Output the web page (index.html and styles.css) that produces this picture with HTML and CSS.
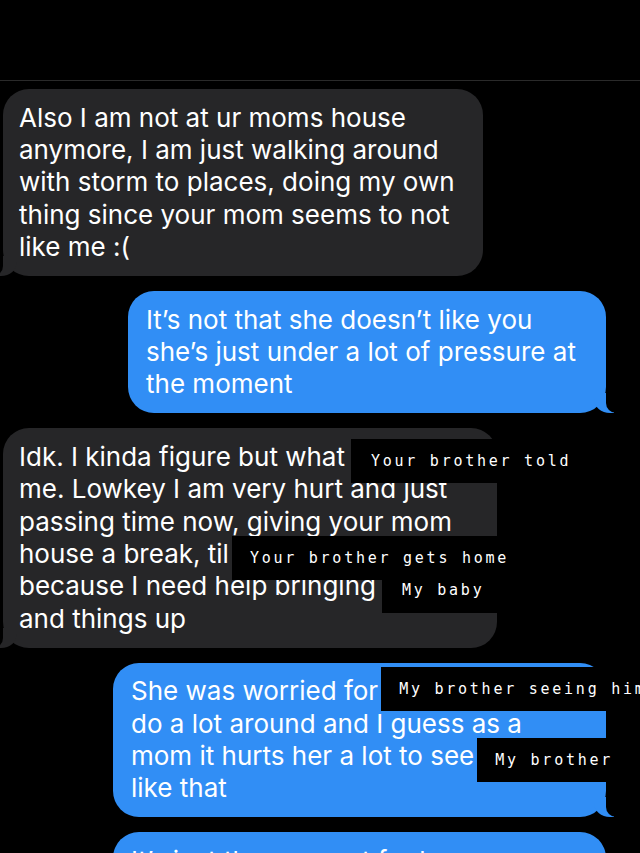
FILE: index.html
```html
<!DOCTYPE html>
<html lang="en">
<head>
<meta charset="utf-8">
<title>Messages</title>
<link rel="stylesheet" href="styles.css">
</head>
<body>
<div class="screen">
  <div class="topbar"></div>
  <div class="thread">
    <div class="msg in w1">
      <p>Also I am not at ur moms house<br>anymore, I am just walking around<br>with storm to places, doing my own<br>thing since your mom seems to not<br>like me :(</p>
    </div>
    <div class="msg out w2">
      <p>It’s not that she doesn’t like you<br>she’s just under a lot of pressure at<br>the moment</p>
    </div>
    <div class="msg in w3">
      <p>Idk. I kinda figure but what<span class="redact">Your brother told</span><br>me. Lowkey I am very hurt and just<br>passing time now, giving your mom<br>house a break, til<span class="redact tight">Your brother gets home</span><br>because I need help bringing<span class="redact">My baby</span><br>and things up</p>
    </div>
    <div class="msg out w4">
      <p>She was worried for<span class="redact tight raise">My brother seeing him</span><br>do a lot around and I guess as a<br>mom it hurts her a lot to see<span class="redact tight">My brother</span><br>like that</p>
    </div>
    <div class="msg out w4">
      <p>It’s just the moment for her<br>and she needs time</p>
    </div>
  </div>
</div>
</body>
</html>
```

FILE: styles.css
```css
html, body {
  margin: 0;
  padding: 0;
  background: #000;
  overflow: hidden;
}

body {
  width: 640px;
  height: 853px;
  font-family: Inter, "Noto Sans", sans-serif;
  color: #fff;
}

.screen {
  width: 640px;
  height: 853px;
  overflow: hidden;
}

.topbar {
  height: 80px;
  border-bottom: 1px solid #2a2a2a;
}

.thread {
  display: flex;
  flex-direction: column;
  gap: 15px;
  padding-top: 8px;
}

.msg {
  position: relative;
  box-sizing: border-box;
  border-radius: 26px;
  padding: 12.5px 18px;
  font-size: 26px;
  line-height: 32.4px;
  white-space: nowrap;
}

.msg p {
  margin: 0;
}

.in {
  align-self: flex-start;
  margin-left: 3px;
  background: #262628;
  padding-left: 16px;
}

.out {
  align-self: flex-end;
  margin-right: 34px;
  background: #318ef5;
}

.w1 { width: 480px; }
.w2 { width: 478px; }
.w3 { width: 494px; }
.w4 { width: 493px; }

/* bubble tails */
.in::before,
.out::before {
  content: "";
  position: absolute;
  bottom: 0;
  width: 20px;
  height: 20px;
}

.in::after,
.out::after {
  content: "";
  position: absolute;
  bottom: 0;
  width: 26px;
  height: 20px;
  background: #000;
}

.in::before {
  left: -6px;
  background: #262628;
  border-bottom-right-radius: 16px 14px;
}

.in::after {
  left: -26px;
  border-bottom-right-radius: 10px;
}

.out::before {
  right: -8px;
  background: #318ef5;
  border-bottom-left-radius: 16px 14px;
}

.out::after {
  right: -26px;
  border-bottom-left-radius: 10px;
}

/* redaction labels pasted over the text */
.redact {
  position: relative;
  z-index: 1;
  display: inline-flex;
  align-items: center;
  height: 44px;
  margin: -6px -300px -10px 6px;
  padding: 0 300px 0 20px;
  background: #000;
  color: #fff;
  font-family: "DejaVu Sans Mono", monospace;
  font-size: 15px;
  letter-spacing: 2.75px;
}

.tight {
  margin-left: 3px;
  padding-left: 18px;
}

.raise {
  top: -6px;
}
```
